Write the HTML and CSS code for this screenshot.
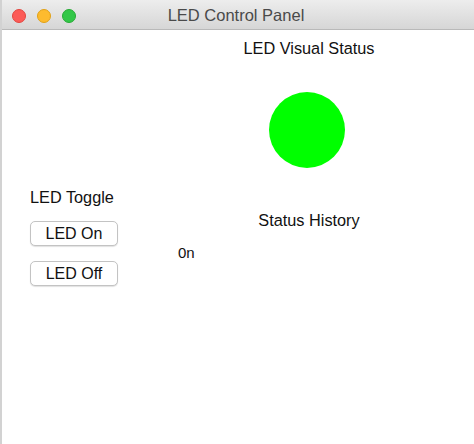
FILE: index.html
```html
<!DOCTYPE html>
<html>
<head>
    <link rel="stylesheet" href="styles.css">
</head>
<body>
    <div class="window">
        <div class="titlebar">
            <div class="lights">
                <span class="light red"></span>
                <span class="light yellow"></span>
                <span class="light green"></span>
            </div>
            <div class="title">LED Control Panel</div>
        </div>

        <div class="content">
            <div class="toggle-panel">
                <div class="label">LED Toggle</div>
                <button class="btn">LED On</button>
                <button class="btn">LED Off</button>
            </div>

            <div class="history-value">0n</div>

            <div class="status-panel">
                <div class="label">LED Visual Status</div>
                <div class="led on"></div>
                <div class="label history-label">Status History</div>
            </div>
        </div>
    </div>
</body>
</html>
```

FILE: styles.css
```css
body {
    margin: 0;
    padding: 0;
    background: white;
    font-family: "Liberation Sans", Arial, sans-serif;
    color: #111;
    overflow: hidden;
}
.window {
    width: 474px;
    height: 444px;
    box-sizing: border-box;
    border-left: 2px solid #d2d2d2;
    background: white;
}
.titlebar {
    position: relative;
    height: 29px;
    background: linear-gradient(#ededed, #d6d6d6);
    border-bottom: 1px solid #b9b9b9;
    display: flex;
    align-items: center;
    justify-content: center;
}
.lights {
    position: absolute;
    left: 10px;
    top: 9px;
    display: flex;
    gap: 11px;
}
.light {
    width: 14px;
    height: 14px;
    border-radius: 50%;
    box-sizing: border-box;
}
.red {
    background: #fc5b57;
    border: 1px solid #e2463f;
}
.yellow {
    background: #fdbb2e;
    border: 1px solid #e1a116;
}
.green {
    background: #33c748;
    border: 1px solid #27aa35;
}
.title {
    font-size: 16.5px;
    color: #4a4a4a;
    margin-left: -4px;
    margin-top: 2px;
}
.content {
    display: flex;
    padding-left: 28px;
}
.label {
    font-size: 16.3px;
    line-height: 20px;
    white-space: nowrap;
}
.toggle-panel {
    width: 148px;
    padding-top: 157px;
    display: flex;
    flex-direction: column;
    align-items: flex-start;
}
.btn {
    width: 88px;
    height: 25px;
    margin-top: 14px;
    padding: 0;
    background: white;
    border: 1px solid #c3c3c3;
    border-radius: 5px;
    box-shadow: 0 1px 1px rgba(0,0,0,0.12);
    font-family: "Liberation Sans", Arial, sans-serif;
    font-size: 16px;
    color: #111;
}
.btn + .btn {
    margin-top: 15px;
}
.history-value {
    width: 52px;
    padding-top: 214px;
    font-size: 15px;
    line-height: 18px;
}
.status-panel {
    width: 158px;
    padding-top: 8px;
    display: flex;
    flex-direction: column;
    align-items: center;
}
.led {
    width: 76px;
    height: 76px;
    margin-top: 34px;
    margin-left: -4px;
    border-radius: 50%;
    background: #999;
}
.led.on {
    background: #00ff00;
}
.history-label {
    margin-top: 42px;
}
```
